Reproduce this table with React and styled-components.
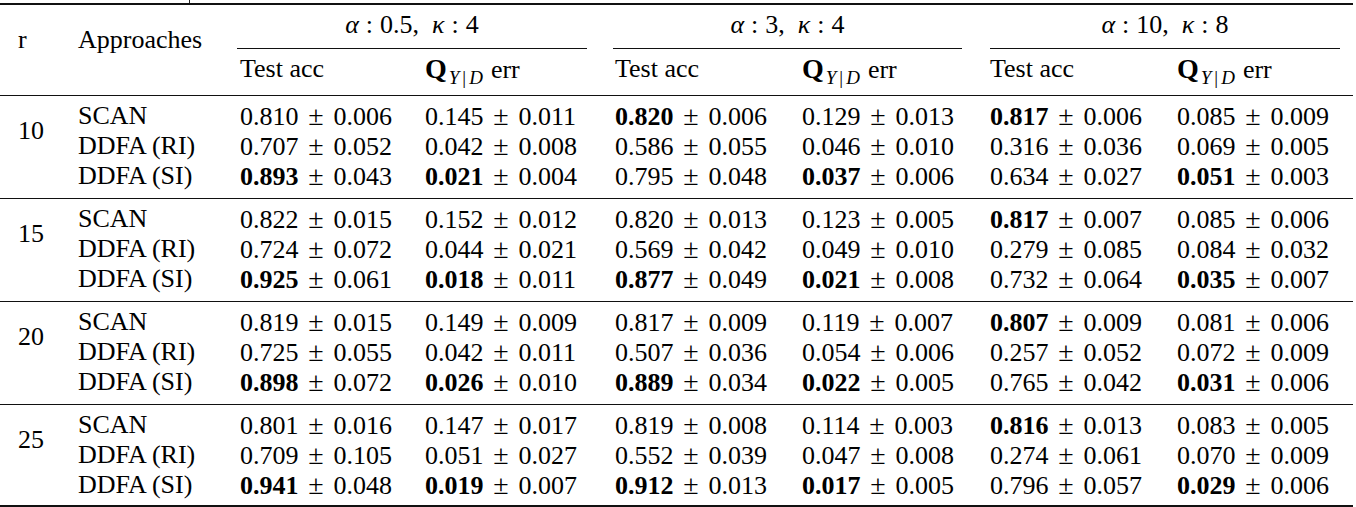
import React from "react";
import styled, { createGlobalStyle } from "styled-components";

const COLS = "78px 162px 185px 190px 187px 188px 187px 176px";

const GlobalStyle = createGlobalStyle`
  html, body { margin: 0; padding: 0; background: #ffffff; }
  body {
    font-family: "Liberation Serif", "Times New Roman", serif;
    color: #000000;
    font-size: 26px;
  }
`;

const Page = styled.div`
  width: 1353px;
`;

const TickStrip = styled.div`
  height: 3px;
  padding-left: 189px;
`;

const Tick = styled.div`
  width: 1px;
  height: 3px;
  background: #222;
`;

const Table = styled.div`
  border-top: 2px solid #111;
  border-bottom: 2px solid #111;
`;

const HeadGrid = styled.div`
  display: grid;
  grid-template-columns: ${COLS};
  padding-top: 5px;
  border-bottom: 1px solid #111;
`;

const SpanHead = styled.div`
  grid-row: 1 / span 2;
  padding-top: 15px;
  padding-left: ${(p) => p.$indent || 0}px;
  line-height: 30px;
  white-space: nowrap;
`;

const GroupHead = styled.div`
  grid-column: span 2;
  margin-left: ${(p) => p.$l}px;
  margin-right: ${(p) => p.$r}px;
  padding-bottom: 8px;
  border-bottom: 1px solid #111;
  text-align: center;
  line-height: 30px;
  white-space: nowrap;
`;

const SubHead = styled.div`
  padding-top: 5px;
  padding-bottom: 8px;
  line-height: 30px;
  white-space: nowrap;
`;

const MathI = styled.span`
  font-style: italic;
`;

const Rel = styled.span`
  margin: 0 7px;
`;

const ThinGap = styled.span`
  display: inline-block;
  width: 13px;
`;

const BoldQ = styled.span`
  font-weight: 700;
  font-size: 28px;
`;

const Sub = styled.span`
  font-size: 19px;
  line-height: 1;
  vertical-align: -6px;
  margin-right: 8px;
  margin-left: 2px;
`;

const SubBar = styled.span`
  margin: 0 3px;
`;

const Group = styled.div`
  display: grid;
  grid-template-columns: ${COLS};
  grid-auto-rows: 30px;
  padding: 5px 0 7px;
  border-bottom: 1px solid #111;
  &:last-child {
    border-bottom: none;
    padding-bottom: 5px;
  }
`;

const RCell = styled.div`
  grid-column: 1;
  grid-row: 1 / span 3;
  padding-left: 18px;
  padding-top: 15px;
  line-height: 30px;
`;

const Cell = styled.div`
  grid-column: ${(p) => p.$col};
  line-height: 30px;
  white-space: nowrap;
`;

const Val = styled.span`
  font-weight: ${(p) => (p.$bold ? 700 : 400)};
`;

const Pm = styled.span`
  display: inline-block;
  width: 35px;
  text-align: center;
  font-size: 28px;
`;

const groups = [
  { a: "0.5", k: "4", l: -3, r: 28 },
  { a: "3", k: "4", l: -2, r: 28 },
  { a: "10", k: "8", l: 0, r: 13 },
];

const approaches = ["SCAN", "DDFA (RI)", "DDFA (SI)"];

// "*" prefix marks bold value
const data = [
  {
    r: "10",
    rows: [
      ["0.810 0.006", "0.145 0.011", "*0.820 0.006", "0.129 0.013", "*0.817 0.006", "0.085 0.009"],
      ["0.707 0.052", "0.042 0.008", "0.586 0.055", "0.046 0.010", "0.316 0.036", "0.069 0.005"],
      ["*0.893 0.043", "*0.021 0.004", "0.795 0.048", "*0.037 0.006", "0.634 0.027", "*0.051 0.003"],
    ],
  },
  {
    r: "15",
    rows: [
      ["0.822 0.015", "0.152 0.012", "0.820 0.013", "0.123 0.005", "*0.817 0.007", "0.085 0.006"],
      ["0.724 0.072", "0.044 0.021", "0.569 0.042", "0.049 0.010", "0.279 0.085", "0.084 0.032"],
      ["*0.925 0.061", "*0.018 0.011", "*0.877 0.049", "*0.021 0.008", "0.732 0.064", "*0.035 0.007"],
    ],
  },
  {
    r: "20",
    rows: [
      ["0.819 0.015", "0.149 0.009", "0.817 0.009", "0.119 0.007", "*0.807 0.009", "0.081 0.006"],
      ["0.725 0.055", "0.042 0.011", "0.507 0.036", "0.054 0.006", "0.257 0.052", "0.072 0.009"],
      ["*0.898 0.072", "*0.026 0.010", "*0.889 0.034", "*0.022 0.005", "0.765 0.042", "*0.031 0.006"],
    ],
  },
  {
    r: "25",
    rows: [
      ["0.801 0.016", "0.147 0.017", "0.819 0.008", "0.114 0.003", "*0.816 0.013", "0.083 0.005"],
      ["0.709 0.105", "0.051 0.027", "0.552 0.039", "0.047 0.008", "0.274 0.061", "0.070 0.009"],
      ["*0.941 0.048", "*0.019 0.007", "*0.912 0.013", "*0.017 0.005", "0.796 0.057", "*0.029 0.006"],
    ],
  },
];

function Measure({ text }) {
  const bold = text.startsWith("*");
  const [v, e] = (bold ? text.slice(1) : text).split(" ");
  return (
    <>
      <Val $bold={bold}>{v}</Val>
      <Pm>±</Pm>
      {e}
    </>
  );
}

function QErr() {
  return (
    <>
      <BoldQ>Q</BoldQ>
      <Sub>
        <MathI>Y</MathI>
        <SubBar>|</SubBar>
        <MathI>D</MathI>
      </Sub>
      err
    </>
  );
}

export default function App() {
  return (
    <Page>
      <GlobalStyle />
      <TickStrip>
        <Tick />
      </TickStrip>
      <Table>
        <HeadGrid>
          <SpanHead $indent={18}>r</SpanHead>
          <SpanHead>Approaches</SpanHead>
          {groups.map((g, i) => (
            <GroupHead key={i} $l={g.l} $r={g.r}>
              <MathI>α</MathI>
              <Rel>:</Rel>
              {g.a},<ThinGap />
              <MathI>κ</MathI>
              <Rel>:</Rel>
              {g.k}
            </GroupHead>
          ))}
          {groups.map((g, i) => (
            <React.Fragment key={i}>
              <SubHead>Test acc</SubHead>
              <SubHead>
                <QErr />
              </SubHead>
            </React.Fragment>
          ))}
        </HeadGrid>
        {data.map((grp) => (
          <Group key={grp.r}>
            <RCell>{grp.r}</RCell>
            {grp.rows.map((row, ri) => (
              <React.Fragment key={ri}>
                <Cell $col={2}>{approaches[ri]}</Cell>
                {row.map((t, ci) => (
                  <Cell key={ci} $col={ci + 3}>
                    <Measure text={t} />
                  </Cell>
                ))}
              </React.Fragment>
            ))}
          </Group>
        ))}
      </Table>
    </Page>
  );
}
